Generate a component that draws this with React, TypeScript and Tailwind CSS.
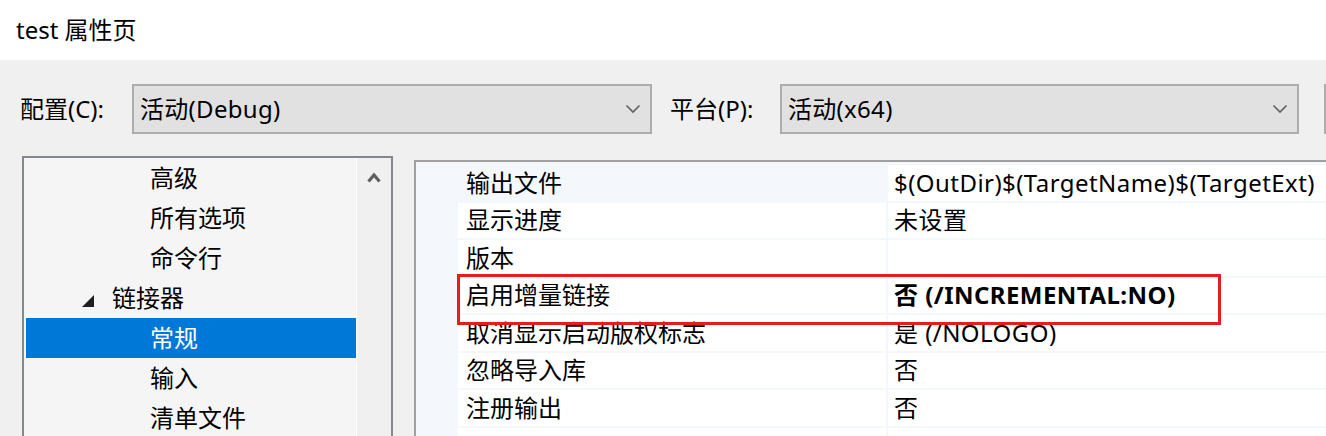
import React from 'react';

const FONT = "font-['Noto_Sans','Noto_Sans_CJK_SC',sans-serif]";

function ChevronDown() {
  return (
    <svg width="16" height="10" viewBox="0 0 16 10" className="shrink-0">
      <path d="M1.5 1.5 L8 8 L14.5 1.5" fill="none" stroke="#606060" strokeWidth="1.6" />
    </svg>
  );
}

function Combo({ width, text }: { width: string; text: string }) {
  return (
    <div className={`${width} shrink-0 h-[50px] flex items-center justify-between border-2 border-[#adadad] bg-[#e1e1e1] pl-[6px] pr-[9px]`}>
      <span className="tracking-[0.3px]">{text}</span>
      <ChevronDown />
    </div>
  );
}

interface TreeItem {
  label: string;
  level: 'leaf' | 'group';
  selected?: boolean;
}

const treeItems: TreeItem[] = [
  { label: '高级', level: 'leaf' },
  { label: '所有选项', level: 'leaf' },
  { label: '命令行', level: 'leaf' },
  { label: '链接器', level: 'group' },
  { label: '常规', level: 'leaf', selected: true },
  { label: '输入', level: 'leaf' },
  { label: '清单文件', level: 'leaf' },
];

interface Prop {
  name: string;
  value: string;
  bold?: boolean;
  highlight?: boolean;
}

const props: Prop[] = [
  { name: '输出文件', value: '$(OutDir)$(TargetName)$(TargetExt)' },
  { name: '显示进度', value: '未设置' },
  { name: '版本', value: '' },
  { name: '启用增量链接', value: '否 (/INCREMENTAL:NO)', bold: true, highlight: true },
  { name: '取消显示启动版权标志', value: '是 (/NOLOGO)' },
  { name: '忽略导入库', value: '否' },
  { name: '注册输出', value: '否' },
  { name: '', value: '' },
];

export default function App() {
  return (
    <div className={`w-[1326px] h-[436px] overflow-hidden bg-[#f0f0f0] text-black text-[24px] leading-none ${FONT}`}>
      {/* title */}
      <div className="h-[60px] bg-white flex items-center pl-4">test 属性页</div>

      {/* configuration row */}
      <div className="flex items-center pt-6 pl-5 whitespace-nowrap">
        <div className="w-[112px] shrink-0">配置(C):</div>
        <Combo width="w-[520px]" text="活动(Debug)" />
        <div className="w-[128px] shrink-0 pl-[18px]">平台(P):</div>
        <Combo width="w-[519px]" text="活动(x64)" />
        <div className="ml-[25px] w-[80px] shrink-0 h-[50px] border-2 border-[#adadad] bg-[#e1e1e1]" />
      </div>

      <div className="flex mt-[22px]">
        {/* tree */}
        <div className="ml-[22px] w-[371px] shrink-0 h-[300px] flex border-2 border-[#828790] bg-[#f5f5f5]">
          <div className="w-[332px] pl-[2px]">
            {treeItems.map((item) => (
              <div
                key={item.label}
                className={`h-[40px] flex items-center ${item.selected ? 'bg-[#0078d7] text-white' : ''} ${item.level === 'leaf' ? 'pl-[124px]' : 'pl-[56px]'}`}
              >
                {item.level === 'group' && (
                  <svg width="12" height="12" viewBox="0 0 12 12" className="mr-[18px] mt-[6px]">
                    <polygon points="12,0 12,12 0,12" fill="#1e1e1e" />
                  </svg>
                )}
                {item.label}
              </div>
            ))}
          </div>
          <div className="w-[35px] border-l border-white bg-[#f0f0f0] flex justify-center pt-[14px]">
            <svg width="14" height="11" viewBox="0 0 14 11">
              <path d="M1.5 9.5 L7 3 L12.5 9.5" fill="none" stroke="#606060" strokeWidth="3.2" />
            </svg>
          </div>
        </div>

        {/* property grid */}
        <div className="ml-[21px] mt-[4px] flex-1 h-[300px] border-l-2 border-t-2 border-[#a0a0a0] bg-[#f4f7fc] pl-[42px] pt-[3px] flex flex-col gap-[2px]">
          {props.map((p, i) => (
            <div key={i} className="relative h-[35.5px] flex shrink-0">
              <div className={`w-[428px] flex items-center pl-2 ${i === 0 ? '' : 'bg-white'}`}>{p.name}</div>
              <div className={`ml-[2px] flex-1 flex items-center pl-[6px] bg-white whitespace-nowrap tracking-[0.45px] ${p.bold ? 'font-bold' : ''}`}>
                {p.value}
              </div>
              {p.highlight && (
                <div className="absolute z-10 left-[-1px] top-[-4px] w-[764px] h-[51px] border-[3.5px] border-[#e81b21]" />
              )}
            </div>
          ))}
        </div>
      </div>
    </div>
  );
}
